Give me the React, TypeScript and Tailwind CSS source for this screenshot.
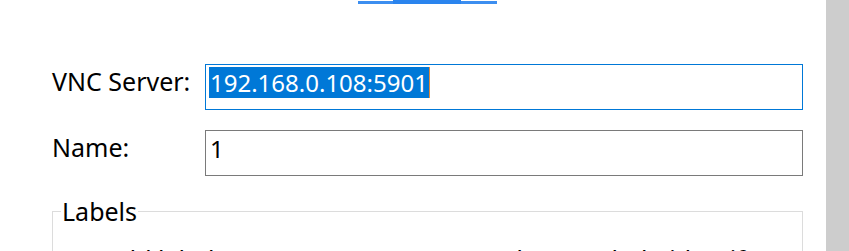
export default function App() {
  return (
    <div className="flex h-[251px] w-[849px] overflow-hidden bg-white font-['Noto_Sans','Open_Sans',sans-serif] text-[25px] text-black">
      <div className="flex min-w-0 flex-1 flex-col">
        {/* focused link underline, cut off at top */}
        <div className="flex h-[5px] items-start pl-[358px]">
          <div className="mt-[1px] h-[3px] w-[35px] bg-[#3c8ef0]" />
          <div className="h-[4px] w-[68px] bg-[#2a84ee]" />
          <div className="mt-[1px] h-[3px] w-[36px] bg-[#3c8ef0]" />
        </div>

        <div className="mt-[60px] flex pl-[52px]">
          <div className="w-[153px] pt-[2px] leading-[31px]">VNC Server:</div>
          <div className="flex h-[46px] w-[598px] items-start border border-[#0078d7] pl-[3px] pt-[2px] text-[24px]">
            <span className="bg-[#0078d7] px-[1px] leading-[31px] text-white">192.168.0.108:5901</span>
            <span className="h-[31px] w-px bg-[#e08a3c]" />
          </div>
        </div>

        <div className="mt-[20px] flex pl-[52px]">
          <div className="w-[153px] pt-[2px] leading-[31px]">Name:</div>
          <div className="h-[46px] w-[598px] border border-[#7a7a7a] pl-[4px] pt-[2px] text-[24px] leading-[31px]">1</div>
        </div>

        <fieldset className="mt-[20px] ml-[52px] w-[751px] border border-[#dcdcdc] pb-4">
          <legend className="ml-[8px] px-[1px] leading-[30px]">Labels</legend>
          <p className="pl-[20px] pt-[18px] leading-[30px]">To add labels, enter comma-separated text to help identify this connection; labels let you filter and find Views.</p>
        </fieldset>
      </div>
      <div className="w-[23px] shrink-0 bg-[#cdcdcd]" />
    </div>
  )
}
